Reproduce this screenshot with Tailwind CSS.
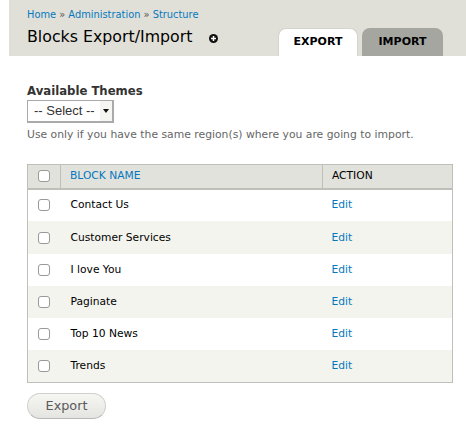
<!DOCTYPE html>
<html lang="en">
<head>
  <meta charset="UTF-8">
  <title>Blocks Export/Import</title>
  <script src="https://cdn.jsdelivr.net/npm/@tailwindcss/browser@4"></script>
</head>
<body class="bg-white font-['DejaVu_Sans',sans-serif] text-[#333] overflow-hidden">
  <header class="ml-[9px] h-[56px] bg-[#e0e0d8] pl-[18px] pr-[23px] flex justify-between">
    <div>
      <nav class="pt-[8px] text-[9.85px] leading-[13px] text-[#555]">
        <a class="text-[#0678be]">Home</a> » <a class="text-[#0678be]">Administration</a> » <a class="text-[#0678be]">Structure</a>
      </nav>
      <div class="flex items-center mt-[5px]">
        <h1 class="text-[15.8px] leading-[22px] font-normal text-black">Blocks Export/Import</h1>
        <svg class="ml-[17px] mt-[3px]" width="9" height="9" viewBox="0 0 9 9"><circle cx="4.5" cy="4.5" r="4.5" fill="#111"/><path d="M4.5 2v5M2 4.5h5" stroke="#fff" stroke-width="1.5"/></svg>
      </div>
    </div>
    <div class="flex items-end gap-[4px]">
      <a class="w-[80px] h-[28px] bg-white border border-b-0 border-[#d4d4cc] rounded-t-[8px] flex items-center justify-center text-[11px] font-bold text-black">EXPORT</a>
      <a class="w-[81px] h-[28px] bg-[#a6a6a0] rounded-t-[8px] flex items-center justify-center text-[11px] font-bold text-black">IMPORT</a>
    </div>
  </header>

  <main class="px-[27px] pr-[13px]">
    <form>
      <label class="block mt-[27px] text-[11.7px] leading-[16px] font-bold text-[#333]">Available Themes</label>
      <div class="mt-[1px] w-[87px] h-[23px] border border-[#aaa] border-b-2 border-r-2 flex items-stretch text-[#333] font-['Liberation_Sans',sans-serif]">
        <span class="flex-1 pl-[6px] text-[13px] leading-[20px] whitespace-nowrap">-- Select --</span>
        <span class="w-[12px] bg-[#f5f5f2] flex items-center justify-center">
          <svg width="6" height="4" viewBox="0 0 6 4"><path d="M0 0h6L3 4z" fill="#111"/></svg>
        </span>
      </div>
      <p class="mt-[5px] text-[10.8px] leading-[14px] text-[#666] whitespace-nowrap">Use only if you have the same region(s) where you are going to import.</p>

      <table class="mt-[22px] w-[426px] border-collapse border border-[#bebfb9] text-[10.7px] text-black">
        <thead>
          <tr class="h-[24px] bg-[#e1e2dc] border-b-2 border-[#bebfb9] text-left">
            <th class="w-[33px] border-r border-[#bebfb9] font-normal"><span class="block ml-[10px] size-[12px] rounded-[3px] border border-[#999] bg-white"></span></th>
            <th class="w-[262px] pl-[9px] border-r border-[#bebfb9] font-normal text-[#0678be]">BLOCK NAME</th>
            <th class="pl-[9px] font-normal">ACTION</th>
          </tr>
        </thead>
        <tbody>
          <tr class="h-[32px] bg-white">
            <td><span class="block ml-[10px] size-[12px] rounded-[3px] border border-[#999] bg-white"></span></td>
            <td class="pl-[10px]">Contact Us</td>
            <td class="pl-[9px] text-[#0678be]">Edit</td>
          </tr>
          <tr class="h-[33px] bg-[#f3f4ee]">
            <td class="pt-px"><span class="block ml-[10px] size-[12px] rounded-[3px] border border-[#999] bg-white"></span></td>
            <td class="pl-[10px] pt-[2px]">Customer Services</td>
            <td class="pl-[9px] pt-[2px] text-[#0678be]">Edit</td>
          </tr>
          <tr class="h-[32px] bg-white">
            <td><span class="block ml-[10px] size-[12px] rounded-[3px] border border-[#999] bg-white"></span></td>
            <td class="pl-[10px] pt-px">I love You</td>
            <td class="pl-[9px] pt-px text-[#0678be]">Edit</td>
          </tr>
          <tr class="h-[32px] bg-[#f3f4ee]">
            <td><span class="block ml-[10px] size-[12px] rounded-[3px] border border-[#999] bg-white"></span></td>
            <td class="pl-[10px] pt-px">Paginate</td>
            <td class="pl-[9px] pt-px text-[#0678be]">Edit</td>
          </tr>
          <tr class="h-[32px] bg-white">
            <td><span class="block ml-[10px] size-[12px] rounded-[3px] border border-[#999] bg-white"></span></td>
            <td class="pl-[10px] pt-px">Top 10 News</td>
            <td class="pl-[9px] pt-px text-[#0678be]">Edit</td>
          </tr>
          <tr class="h-[33px] bg-[#f3f4ee]">
            <td><span class="block ml-[10px] size-[12px] rounded-[3px] border border-[#999] bg-white"></span></td>
            <td class="pl-[10px]">Trends</td>
            <td class="pl-[9px] text-[#0678be]">Edit</td>
          </tr>
        </tbody>
      </table>

      <button type="button" class="mt-[10px] w-[79px] h-[26px] rounded-[13px] border border-[#d0d0cc] border-b-[#b8b8b4] bg-linear-to-b from-[#f6f6f3] to-[#e4e4e0] text-[12.8px] text-[#5a5a5a]">Export</button>
    </form>
  </main>
</body>
</html>
